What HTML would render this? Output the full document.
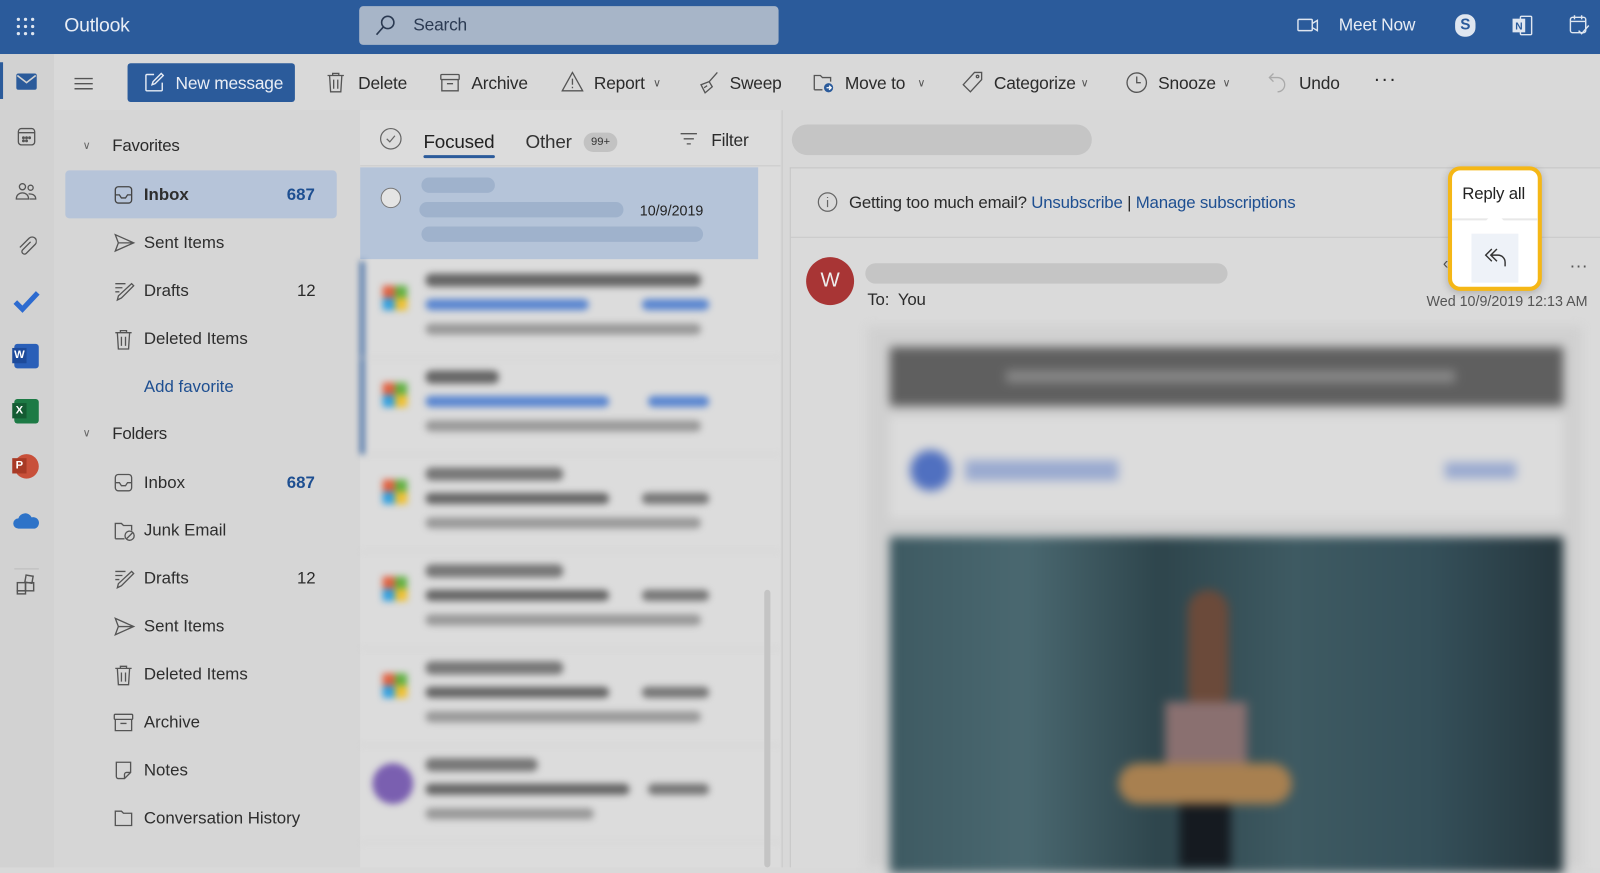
<!DOCTYPE html>
<html><head><meta charset="utf-8"><style>
*{box-sizing:border-box;margin:0;padding:0}
html,body{width:1600px;height:850px;overflow:hidden;background:#d9d9d9}
#w{position:absolute;left:0;top:0;width:1568px;height:833px;transform:scale(1.020408);transform-origin:0 0;font-family:"Liberation Sans",sans-serif;color:#2b2b2b;background:#d9d9d9}
.a{position:absolute}
.top{left:0;top:0;width:1568px;height:53px;background:#2b5b9b;color:#e6ecf5}
.rail{left:0;top:53px;width:53px;height:797px;background:#d2d2d2}
.nav{left:53px;top:108px;width:300px;height:742px;background:#d6d6d6}
.tb{left:53px;top:53px;width:1547px;height:55px;background:#d9d9d9}
.list{left:353px;top:108px;width:412px;height:742px;background:#dcdcdc}
.read{left:766px;top:108px;width:834px;height:742px;background:#d8d8d8}
.t{font-size:17px;letter-spacing:-0.2px;white-space:nowrap}
.ni{position:absolute;left:88px;font-size:16.5px;color:#2e2e2e;white-space:nowrap}
.ni svg{position:absolute;left:-30px;top:-1px}
.cnt{position:absolute;left:300px;font-size:16.5px}
.blur{filter:blur(3px)}
.msg{position:absolute;left:0;width:412px;height:95px;border-bottom:1px solid #d0d0d0}
.bar{position:absolute;height:12px;border-radius:6px}
.chev{position:absolute;top:22px;font-size:11px;color:#555}
</style></head><body><div id="w">
<div class="a top">
 <svg class="a" style="left:15px;top:16px" width="20" height="20" fill="#dfe6f0"><circle cx="3" cy="3" r="1.6"/><circle cx="10" cy="3" r="1.6"/><circle cx="17" cy="3" r="1.6"/><circle cx="3" cy="10" r="1.6"/><circle cx="10" cy="10" r="1.6"/><circle cx="17" cy="10" r="1.6"/><circle cx="3" cy="17" r="1.6"/><circle cx="10" cy="17" r="1.6"/><circle cx="17" cy="17" r="1.6"/></svg>
 <div class="a t" style="left:63px;top:15px;font-size:19px;color:#e8edf5">Outlook</div>
 <div class="a" style="left:352px;top:6px;width:411px;height:38px;background:#a7b5c8;border-radius:4px"></div>
 <svg class="a" style="left:367px;top:14px" width="22" height="22" fill="none" stroke="#2b3a52" stroke-width="1.6"><circle cx="13" cy="8" r="6"/><path d="M9 12L2 20"/></svg>
 <div class="a t" style="left:405px;top:15px;color:#2b3a52">Search</div>
 <svg class="a" style="left:1271px;top:16px" width="22" height="18" fill="none" stroke="#dfe6f0" stroke-width="1.4"><rect x="1" y="3" width="14" height="11" rx="1"/><path d="M15 7l5-3v10l-5-3"/></svg>
 <div class="a t" style="left:1312px;top:15px;color:#e8edf5">Meet Now</div>
 <div class="a" style="left:1426px;top:14px;width:20px;height:22px;border-radius:9px;background:#dfe6f0;color:#2b5b9b;font-weight:bold;font-size:15px;text-align:center;line-height:22px">S</div>
 <svg class="a" style="left:1481px;top:14px" width="22" height="22" fill="none" stroke="#dfe6f0" stroke-width="1.4"><rect x="9" y="2" width="11" height="18" rx="1"/><rect x="2" y="5" width="11" height="12" fill="#dfe6f0"/><text x="4" y="15" font-size="10" fill="#2b5b9b" stroke="none" font-weight="bold" font-family="Liberation Sans">N</text></svg>
 <svg class="a" style="left:1537px;top:14px" width="22" height="22" fill="none" stroke="#dfe6f0" stroke-width="1.4"><rect x="2" y="3" width="15" height="15" rx="2"/><path d="M2 7h15M6 1v4M13 1v4M10 16l3 3 7-8"/></svg>
</div>
<div class="a rail">
 <div class="a" style="left:0;top:8px;width:3px;height:36px;background:#2b5b9b"></div>
 <svg class="a" style="left:15px;top:18px" width="22" height="18"><rect x="1" y="1" width="20" height="16" rx="2" fill="#2b5b9b"/><path d="M2 3l9 7 9-7" stroke="#d2d2d2" stroke-width="1.6" fill="none"/></svg>
 <svg class="a" style="left:16px;top:71px" width="20" height="20" fill="none" stroke="#555" stroke-width="1.3"><rect x="2" y="2" width="16" height="16" rx="3"/><path d="M2 6h16"/><circle cx="7" cy="11" r=".8" fill="#555"/><circle cx="10" cy="11" r=".8" fill="#555"/><circle cx="13" cy="11" r=".8" fill="#555"/><circle cx="7" cy="14" r=".8" fill="#555"/><circle cx="10" cy="14" r=".8" fill="#555"/></svg>
 <svg class="a" style="left:15px;top:125px" width="22" height="20" fill="none" stroke="#555" stroke-width="1.3"><circle cx="7" cy="5" r="3"/><circle cx="15" cy="6" r="2.5"/><path d="M1 17c0-4 3-6 6-6s6 2 6 6zM13 12c4 0 7 1 7 5h-6"/></svg>
 <svg class="a" style="left:16px;top:178px" width="20" height="22" fill="none" stroke="#555" stroke-width="1.3"><path d="M14 6l-8 8a2.5 2.5 0 003.5 3.5l9-9a4 4 0 00-6-6l-9 9"/></svg>
 <svg class="a" style="left:12px;top:230px" width="28" height="24"><path d="M3 13l7 7L25 4" stroke="#2d6bd0" stroke-width="5" fill="none"/></svg>
 <div class="a" style="left:14px;top:284px;width:24px;height:24px;background:#2a5fb8;border-radius:3px"></div><div class="a" style="left:12px;top:288px;width:14px;height:15px;background:#1d4a9a;color:#fff;font-size:11px;font-weight:bold;text-align:center;line-height:15px">W</div>
 <div class="a" style="left:14px;top:338px;width:24px;height:24px;background:#1d7a45;border-radius:3px"></div><div class="a" style="left:12px;top:342px;width:14px;height:15px;background:#145c33;color:#fff;font-size:11px;font-weight:bold;text-align:center;line-height:15px">X</div>
 <div class="a" style="left:14px;top:392px;width:24px;height:24px;background:#c8503a;border-radius:12px"></div><div class="a" style="left:12px;top:396px;width:14px;height:15px;background:#a83a26;color:#fff;font-size:11px;font-weight:bold;text-align:center;line-height:15px">P</div>
 <svg class="a" style="left:12px;top:448px" width="28" height="18"><path d="M6 17a5 5 0 010-10 7 7 0 0113-1 5.5 5.5 0 013 11z" fill="#2e73c8"/></svg>
 <div class="a" style="left:14px;top:504px;width:24px;height:1px;background:#bbb"></div>
 <svg class="a" style="left:15px;top:509px" width="22" height="22" fill="none" stroke="#555" stroke-width="1.4"><rect x="2" y="9" width="8" height="8"/><rect x="10" y="9" width="8" height="8"/><rect x="2" y="17" width="8" height="3"/><rect x="10" y="2" width="7" height="7" transform="rotate(10 13 5)"/></svg>
</div>
<div class="a tb">
 <svg class="a" style="left:20px;top:22px" width="18" height="14" stroke="#555" stroke-width="1.4"><path d="M0 2h18M0 7h18M0 12h18"/></svg>
 <div class="a" style="left:72px;top:9px;width:164px;height:38px;background:#2b5b9b;border-radius:3px"></div>
 <svg class="a" style="left:88px;top:18px" width="20" height="20" fill="none" stroke="#e6ecf5" stroke-width="1.4"><path d="M10 2H3a1 1 0 00-1 1v14a1 1 0 001 1h14a1 1 0 001-1v-7M8 12l1-3 8-8 2 2-8 8z"/></svg>
 <div class="a t" style="left:119px;top:19px;color:#e8edf5">New message</div>
 <svg class="a" style="left:266px;top:17px" width="20" height="22" fill="none" stroke="#555" stroke-width="1.3"><path d="M2 4h16M7 4V2h6v2M4 4l1 16h10l1-16M8 8v9M12 8v9"/></svg>
 <div class="a t" style="left:298px;top:19px">Delete</div>
 <svg class="a" style="left:378px;top:18px" width="20" height="20" fill="none" stroke="#555" stroke-width="1.3"><rect x="1" y="2" width="18" height="5" rx="1"/><path d="M2 7v11h16V7M7 11h6"/></svg>
 <div class="a t" style="left:409px;top:19px">Archive</div>
 <svg class="a" style="left:497px;top:17px" width="22" height="20" fill="none" stroke="#555" stroke-width="1.3"><path d="M11 1L1 19h20zM11 7v6M11 15v1.5"/></svg>
 <div class="a t" style="left:529px;top:19px">Report</div>
 <div class="chev" style="left:587px">&#x2228;</div>
 <svg class="a" style="left:630px;top:17px" width="22" height="22" fill="none" stroke="#555" stroke-width="1.3"><path d="M20 1l-8 9M12 10l-8 3 4 8 7-6zM7 16l3-2"/></svg>
 <div class="a t" style="left:662px;top:19px">Sweep</div>
 <svg class="a" style="left:743px;top:17px" width="22" height="22" fill="none" stroke="#555" stroke-width="1.3"><path d="M2 18V4h6l2 2h8v4M2 18h8"/><circle cx="16" cy="16" r="4.5" fill="#2b5b9b" stroke="none"/><path d="M14 16h4M16.5 14l2 2-2 2" stroke="#fff"/></svg>
 <div class="a t" style="left:775px;top:19px">Move to</div>
 <div class="chev" style="left:846px">&#x2228;</div>
 <svg class="a" style="left:889px;top:16px" width="22" height="24" fill="none" stroke="#555" stroke-width="1.3"><path d="M13 2h7v7L9 21l-7-7z"/><circle cx="16" cy="6" r="1.2"/></svg>
 <div class="a t" style="left:921px;top:19px">Categorize</div>
 <div class="chev" style="left:1006px">&#x2228;</div>
 <svg class="a" style="left:1050px;top:17px" width="22" height="22" fill="none" stroke="#555" stroke-width="1.3"><circle cx="11" cy="11" r="9.5"/><path d="M11 5v6h4"/></svg>
 <div class="a t" style="left:1082px;top:19px">Snooze</div>
 <div class="chev" style="left:1145px">&#x2228;</div>
 <svg class="a" style="left:1190px;top:17px" width="20" height="22" fill="none" stroke="#aaa" stroke-width="1.3"><path d="M5 2L1 6l4 4M1 6h8a7 7 0 010 14"/></svg>
 <div class="a t" style="left:1220px;top:19px">Undo</div>
 <div class="a t" style="left:1293px;top:14px;font-size:20px;letter-spacing:1px">···</div>
</div>
<div class="a nav">
 <div class="a" style="left:28px;top:28px;font-size:11px;color:#666">&#x2228;</div>
 <div class="a t" style="left:57px;top:26px;font-size:16.5px">Favorites</div>
 <div class="a" style="left:11px;top:59px;width:266px;height:47px;background:#b6c4d9;border-radius:4px"></div>
 <div class="ni" style="top:74px;font-weight:bold">Inbox<svg width="20" height="20" fill="none" stroke="#444" stroke-width="1.3"><rect x="2" y="2" width="16" height="16" rx="3"/><path d="M2 10h4l2 3h4l2-3h4"/></svg></div>
 <div class="cnt" style="top:74px;left:228px;color:#1e4f91;font-weight:bold">687</div>
 <div class="ni" style="top:121px">Sent Items<svg width="22" height="20" fill="none" stroke="#555" stroke-width="1.3"><path d="M2 2l18 8-18 8 3-8zM5 10h15"/></svg></div>
 <div class="ni" style="top:168px">Drafts<svg width="22" height="22" fill="none" stroke="#555" stroke-width="1.3"><path d="M2 3h10M2 7h7M2 11h4M18 3l2 2L8 17l-4 2 1-4z"/></svg></div>
 <div class="cnt" style="top:168px;left:238px">12</div>
 <div class="ni" style="top:215px">Deleted Items<svg width="20" height="22" fill="none" stroke="#555" stroke-width="1.3"><path d="M2 4h16M7 4V2h6v2M4 4l1 16h10l1-16M8 8v9M12 8v9"/></svg></div>
 <div class="ni" style="top:262px;color:#1e4f91">Add favorite</div>
 <div class="a" style="left:28px;top:310px;font-size:11px;color:#666">&#x2228;</div>
 <div class="a t" style="left:57px;top:308px;font-size:16.5px">Folders</div>
 <div class="ni" style="top:356px">Inbox<svg width="20" height="20" fill="none" stroke="#555" stroke-width="1.3"><rect x="2" y="2" width="16" height="16" rx="3"/><path d="M2 10h4l2 3h4l2-3h4"/></svg></div>
 <div class="cnt" style="top:356px;left:228px;color:#1e4f91;font-weight:bold">687</div>
 <div class="ni" style="top:403px">Junk Email<svg width="22" height="22" fill="none" stroke="#555" stroke-width="1.3"><path d="M2 18V3h6l2 2h8v5M2 18h9"/><circle cx="16" cy="15" r="4.5"/><path d="M13 18l6-6"/></svg></div>
 <div class="ni" style="top:450px">Drafts<svg width="22" height="22" fill="none" stroke="#555" stroke-width="1.3"><path d="M2 3h10M2 7h7M2 11h4M18 3l2 2L8 17l-4 2 1-4z"/></svg></div>
 <div class="cnt" style="top:450px;left:238px">12</div>
 <div class="ni" style="top:497px">Sent Items<svg width="22" height="20" fill="none" stroke="#555" stroke-width="1.3"><path d="M2 2l18 8-18 8 3-8zM5 10h15"/></svg></div>
 <div class="ni" style="top:544px">Deleted Items<svg width="20" height="22" fill="none" stroke="#555" stroke-width="1.3"><path d="M2 4h16M7 4V2h6v2M4 4l1 16h10l1-16M8 8v9M12 8v9"/></svg></div>
 <div class="ni" style="top:591px">Archive<svg width="20" height="20" fill="none" stroke="#555" stroke-width="1.3"><rect x="1" y="2" width="18" height="5" rx="1"/><path d="M2 7v11h16V7M7 11h6"/></svg></div>
 <div class="ni" style="top:638px">Notes<svg width="20" height="20" fill="none" stroke="#555" stroke-width="1.3"><path d="M3 2h14v10l-6 6H5a2 2 0 01-2-2zM17 12h-4a2 2 0 00-2 2v4"/></svg></div>
 <div class="ni" style="top:685px">Conversation History<svg width="20" height="20" fill="none" stroke="#555" stroke-width="1.3"><path d="M2 17V3h6l2 2h8v12z"/></svg></div>
</div>
<div class="a list">
 <div class="a" style="left:0;top:0;width:412px;height:55px;background:#dcdcdc;border-bottom:1px solid #ccc"></div>
 <svg class="a" style="left:19px;top:17px" width="22" height="22" fill="none" stroke="#666" stroke-width="1.2"><circle cx="11" cy="11" r="10"/><path d="M7 11l3 3 5-6"/></svg>
 <div class="a t" style="left:62px;top:20px;font-size:18.5px;font-weight:500;color:#222">Focused</div>
 <div class="a" style="left:62px;top:44px;width:70px;height:3px;background:#2b5b9b;border-radius:2px"></div>
 <div class="a t" style="left:162px;top:20px;font-size:18.5px;color:#333">Other</div>
 <div class="a" style="left:219px;top:22px;width:33px;height:19px;border-radius:10px;background:#c2c2c2;font-size:11px;text-align:center;line-height:19px;color:#333">99+</div>
 <svg class="a" style="left:313px;top:21px" width="18" height="14" stroke="#555" stroke-width="1.3"><path d="M1 2h16M4 7h10M7 12h4"/></svg>
 <div class="a t" style="left:344px;top:20px">Filter</div>
 <div class="a" style="left:0;top:56px;width:390px;height:90px;background:#b5c4d9"></div>
 <div class="a" style="left:20px;top:76px;width:20px;height:20px;border-radius:50%;border:1.3px solid #777;background:#e4e4e4"></div>
 <div class="bar" style="left:60px;top:66px;width:72px;height:15px;border-radius:8px;background:#9fb2cc"></div>
 <div class="bar" style="left:58px;top:90px;width:200px;height:15px;border-radius:8px;background:#9fb2cc"></div>
 <div class="a" style="left:274px;top:90px;font-size:14px;color:#222">10/9/2019</div>
 <div class="bar" style="left:60px;top:114px;width:276px;height:15px;border-radius:8px;background:#9fb2cc"></div>
 <div class="blur">
 <div class="a" style="left:0;top:148px;width:4px;height:190px;background:#2b5b9b"></div>
 <div class="msg" style="top:148px"></div>
 <div class="msg" style="top:243px"></div>
 <div class="msg" style="top:338px"></div>
 <div class="msg" style="top:433px"></div>
 <div class="msg" style="top:528px"></div>
 <div class="msg" style="top:623px"></div>
 </div>
 <div class="blur" style="filter:blur(3.5px)">
  <div class="a" style="left:22px;top:172px;width:24px;height:24px;background:linear-gradient(90deg,#e06040 50%,#60b040 50%)"></div><div class="a" style="left:22px;top:184px;width:24px;height:12px;background:linear-gradient(90deg,#30a0e0 50%,#f0c030 50%)"></div>
  <div class="bar" style="left:64px;top:160px;width:270px;height:13px;background:#666"></div>
  <div class="bar" style="left:64px;top:185px;width:160px;height:11px;background:#5a86d0"></div><div class="bar" style="left:276px;top:185px;width:66px;height:11px;background:#5a86d0"></div>
  <div class="bar" style="left:64px;top:209px;width:270px;height:11px;background:#999"></div>
  <div class="a" style="left:22px;top:267px;width:24px;height:24px;background:linear-gradient(90deg,#e06040 50%,#60b040 50%)"></div><div class="a" style="left:22px;top:279px;width:24px;height:12px;background:linear-gradient(90deg,#30a0e0 50%,#f0c030 50%)"></div>
  <div class="bar" style="left:64px;top:255px;width:72px;height:13px;background:#666"></div>
  <div class="bar" style="left:64px;top:280px;width:180px;height:11px;background:#5a86d0"></div><div class="bar" style="left:282px;top:280px;width:60px;height:11px;background:#5a86d0"></div>
  <div class="bar" style="left:64px;top:304px;width:270px;height:11px;background:#999"></div>
  <div class="a" style="left:22px;top:362px;width:24px;height:24px;background:linear-gradient(90deg,#e06040 50%,#60b040 50%)"></div><div class="a" style="left:22px;top:374px;width:24px;height:12px;background:linear-gradient(90deg,#30a0e0 50%,#f0c030 50%)"></div>
  <div class="bar" style="left:64px;top:350px;width:135px;height:13px;background:#777"></div>
  <div class="bar" style="left:64px;top:375px;width:180px;height:11px;background:#666"></div><div class="bar" style="left:276px;top:375px;width:66px;height:11px;background:#777"></div>
  <div class="bar" style="left:64px;top:399px;width:270px;height:11px;background:#999"></div>
  <div class="a" style="left:22px;top:457px;width:24px;height:24px;background:linear-gradient(90deg,#e06040 50%,#60b040 50%)"></div><div class="a" style="left:22px;top:469px;width:24px;height:12px;background:linear-gradient(90deg,#30a0e0 50%,#f0c030 50%)"></div>
  <div class="bar" style="left:64px;top:445px;width:135px;height:13px;background:#777"></div>
  <div class="bar" style="left:64px;top:470px;width:180px;height:11px;background:#666"></div><div class="bar" style="left:276px;top:470px;width:66px;height:11px;background:#777"></div>
  <div class="bar" style="left:64px;top:494px;width:270px;height:11px;background:#999"></div>
  <div class="a" style="left:22px;top:552px;width:24px;height:24px;background:linear-gradient(90deg,#e06040 50%,#60b040 50%)"></div><div class="a" style="left:22px;top:564px;width:24px;height:12px;background:linear-gradient(90deg,#30a0e0 50%,#f0c030 50%)"></div>
  <div class="bar" style="left:64px;top:540px;width:135px;height:13px;background:#777"></div>
  <div class="bar" style="left:64px;top:565px;width:180px;height:11px;background:#666"></div><div class="bar" style="left:276px;top:565px;width:66px;height:11px;background:#777"></div>
  <div class="bar" style="left:64px;top:589px;width:270px;height:11px;background:#999"></div>
  <div class="a" style="left:12px;top:640px;width:40px;height:40px;border-radius:50%;background:#7a5fb0"></div>
  <div class="bar" style="left:64px;top:635px;width:110px;height:13px;background:#777"></div>
  <div class="bar" style="left:64px;top:660px;width:200px;height:11px;background:#666"></div><div class="bar" style="left:282px;top:660px;width:60px;height:11px;background:#777"></div>
  <div class="bar" style="left:64px;top:684px;width:165px;height:11px;background:#999"></div>
 </div>
 <div class="a" style="left:396px;top:470px;width:6px;height:272px;border-radius:3px;background:#c4c4c4"></div>
</div>
<div class="a read">
 <div class="a" style="left:0;top:0;width:1px;height:742px;background:#c8c8c8"></div>
 <div class="a" style="left:10px;top:14px;width:294px;height:30px;border-radius:15px;background:#c5c5c5"></div>
 <div class="a" style="left:8px;top:56px;width:826px;height:686px;background:#dadada;border-top:1px solid #c6c6c6;border-left:1px solid #c6c6c6"></div>
 <svg class="a" style="left:35px;top:80px" width="20" height="20" fill="none" stroke="#666" stroke-width="1.2"><circle cx="10" cy="10" r="9"/><path d="M10 8v7M10 5v1"/></svg>
 <div class="a t" style="left:66px;top:82px;font-size:16.5px">Getting too much email? <span style="color:#1e4f91">Unsubscribe</span> | <span style="color:#1e4f91">Manage subscriptions</span></div>
 <div class="a" style="left:9px;top:124px;width:825px;height:1px;background:#c8c8c8"></div>
 <div class="a" style="left:24px;top:144px;width:47px;height:47px;border-radius:50%;background:#a83535;color:#eee;font-size:20px;text-align:center;line-height:47px">W</div>
 <div class="a" style="left:82px;top:150px;width:355px;height:20px;border-radius:10px;background:#c5c5c5"></div>
 <div class="a t" style="left:84px;top:177px;font-size:16.5px">To:&nbsp; You</div>
 <div class="a" style="left:632px;top:179px;font-size:14px;color:#555">Wed 10/9/2019 12:13 AM</div>
 <div class="a" style="left:772px;top:142px;font-size:18px;color:#555">···</div>
 <div class="a" style="left:648px;top:142px;font-size:16px;color:#555">‹</div>
 <div class="a" style="left:740px;top:142px;font-size:16px;color:#555">›</div>
 <div class="blur" style="filter:blur(5px)">
  <div class="a" style="left:84px;top:212px;width:700px;height:530px;background:#d0d0d0"></div>
  <div class="a" style="left:106px;top:232px;width:660px;height:58px;background:#5f5f5f"></div>
  <div class="a" style="left:220px;top:255px;width:440px;height:12px;background:#888"></div>
  <div class="a" style="left:106px;top:300px;width:660px;height:100px;background:#dcdcdc"></div>
  <div class="a" style="left:126px;top:333px;width:40px;height:40px;border-radius:50%;background:#5070c0"></div>
  <div class="a" style="left:180px;top:343px;width:150px;height:20px;background:#9aaad0"></div>
  <div class="a" style="left:650px;top:345px;width:70px;height:16px;background:#9aaad0"></div>
  <div class="a" style="left:106px;top:418px;width:660px;height:330px;background:linear-gradient(90deg,#3e5a62 0%,#4a6870 20%,#2e454c 40%,#3e5a62 60%,#35505a 80%,#25363d 100%)"></div>
  <div class="a" style="left:398px;top:470px;width:40px;height:120px;border-radius:20px;background:#6b4a3a"></div>
  <div class="a" style="left:376px;top:580px;width:80px;height:80px;background:#8a7070"></div>
  <div class="a" style="left:330px;top:640px;width:170px;height:40px;border-radius:20px;background:#a88050"></div>
  <div class="a" style="left:390px;top:680px;width:50px;height:62px;background:#151a20"></div>
 </div>
</div>
<div class="a" style="left:1419px;top:163px;width:92px;height:122px;border:4px solid #f5b716;border-radius:12px;background:#ffffff;box-shadow:0 2px 8px rgba(0,0,0,.2)"></div>
<div class="a t" style="left:1433px;top:181px;font-size:16.5px;color:#222">Reply all</div>
<div class="a" style="left:1423px;top:214px;width:84px;height:2px;background:#e8e8e8"></div>
<div class="a" style="left:1459px;top:210px;width:12px;height:12px;background:#fff;transform:rotate(45deg)"></div>
<div class="a" style="left:1442px;top:229px;width:46px;height:48px;background:#eef2f8"></div>
<svg class="a" style="left:1454px;top:241px" width="24" height="24" fill="none" stroke="#333" stroke-width="1.4"><path d="M8 3L2 9l6 6M13 3L7 9l6 6M7 9h7a7 7 0 017 7v4"/></svg>
</div></body></html>
